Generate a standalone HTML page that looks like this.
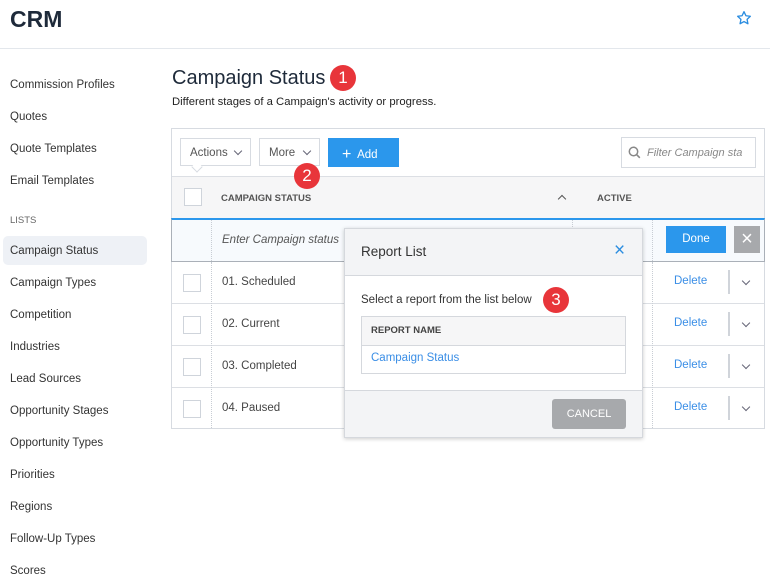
<!DOCTYPE html>
<html><head><style>
*{margin:0;padding:0;box-sizing:border-box}
body{width:770px;height:578px;overflow:hidden;background:#fff;font-family:"Liberation Sans",sans-serif;color:#333;position:relative}
.a{position:absolute;white-space:nowrap}
.side{font-size:11.5px;color:#333}
.badge{position:absolute;width:26px;height:26px;border-radius:50%;background:#e8353a;color:#fff;font-size:17px;text-align:center;line-height:26px}
.cb{position:absolute;width:18px;height:18px;border:1px solid #cfd4db;background:#fff}
.hl{position:absolute;height:1px;background:#dcdfe4}
.del{position:absolute;color:#3a8ee6;font-size:11.5px}
.chev{position:absolute;width:6px;height:6px;border-right:1.3px solid #667;border-bottom:1.3px solid #667;transform:rotate(45deg)}
</style></head><body>
<div class="a" style="left:10px;top:6px;font-size:23px;font-weight:bold;color:#1e2a3a">CRM</div>
<svg class="a" style="left:736px;top:10px" width="16" height="16" viewBox="0 0 24 24"><path d="M12 2.5l2.9 6.1 6.6.8-4.9 4.6 1.3 6.6L12 17.3 6.1 20.6l1.3-6.6L2.5 9.4l6.6-.8z" fill="none" stroke="#2b8de0" stroke-width="2" stroke-linejoin="round"/></svg>
<div class="hl" style="left:0;top:48px;width:770px;background:#e3e7ec"></div>

<div class="a" style="left:3px;top:236px;width:144px;height:29px;background:#eef1f6;border-radius:5px"></div>
<div class="a side" style="left:10px;top:79px">Commission Profiles</div>
<div class="a side" style="left:10px;top:111px">Quotes</div>
<div class="a side" style="left:10px;top:143px">Quote Templates</div>
<div class="a side" style="left:10px;top:175px">Email Templates</div>
<div class="a" style="left:10px;top:215px;font-size:9.5px;color:#666">LISTS</div>
<div class="a side" style="left:10px;top:245px">Campaign Status</div>
<div class="a side" style="left:10px;top:277px">Campaign Types</div>
<div class="a side" style="left:10px;top:309px">Competition</div>
<div class="a side" style="left:10px;top:341px">Industries</div>
<div class="a side" style="left:10px;top:373px">Lead Sources</div>
<div class="a side" style="left:10px;top:405px">Opportunity Stages</div>
<div class="a side" style="left:10px;top:437px">Opportunity Types</div>
<div class="a side" style="left:10px;top:469px">Priorities</div>
<div class="a side" style="left:10px;top:501px">Regions</div>
<div class="a side" style="left:10px;top:533px">Follow-Up Types</div>
<div class="a side" style="left:10px;top:565px">Scores</div>

<div class="a" style="left:172px;top:67px;font-size:20px;color:#1e2a3a">Campaign Status</div>
<div class="badge" style="left:330px;top:65px">1</div>
<div class="a" style="left:172px;top:96px;font-size:11.3px;color:#222">Different stages of a Campaign's activity or progress.</div>

<!-- table -->
<div class="a" style="left:171px;top:128px;width:594px;height:301px;border:1px solid #d7dbe1"></div>
<div class="a" style="left:180px;top:138px;width:71px;height:28px;border:1px solid #d7dbe1;font-size:11.5px;color:#555;padding:8px 0 0 9px">Actions</div>
<div class="chev" style="left:235px;top:148px"></div>
<div class="a" style="left:193px;top:163px;width:8px;height:8px;border-right:1px solid #d7dbe1;border-bottom:1px solid #d7dbe1;background:#fff;transform:rotate(45deg)"></div>
<div class="a" style="left:259px;top:138px;width:61px;height:28px;border:1px solid #d7dbe1;font-size:11.5px;color:#555;padding:8px 0 0 9px">More</div>
<div class="chev" style="left:304px;top:148px"></div>
<div class="a" style="left:328px;top:138px;width:71px;height:29px;background:#2b97ec;color:#fff;font-size:11.5px;padding:7px 0 0 14px"><span style="font-size:16px;position:relative;top:1px;font-weight:300">+</span>&nbsp; Add</div>
<div class="a" style="left:621px;top:137px;width:135px;height:31px;border:1px solid #d7dbe1;font-size:11px;font-style:italic;color:#888;padding:9px 0 0 25px;overflow:hidden">Filter Campaign sta</div>
<svg class="a" style="left:628px;top:146px" width="13" height="13" viewBox="0 0 13 13"><circle cx="5.5" cy="5.5" r="4.2" fill="none" stroke="#888" stroke-width="1.5"/><path d="M8.6 8.6l3.2 3.2" stroke="#888" stroke-width="1.6"/></svg>

<div class="a" style="left:172px;top:176px;width:592px;height:43px;background:#f6f6f7;border-top:1px solid #dcdfe4"></div>
<div class="cb" style="left:184px;top:188px"></div>
<div class="a" style="left:221px;top:193px;font-size:9.5px;font-weight:bold;color:#555">CAMPAIGN STATUS</div>
<div class="a" style="left:559px;top:196px;width:6px;height:6px;border-left:1.3px solid #555;border-top:1.3px solid #555;transform:rotate(45deg)"></div>
<div class="a" style="left:597px;top:193px;font-size:9.5px;font-weight:bold;color:#555">ACTIVE</div>
<div class="badge" style="left:294px;top:163px">2</div>

<!-- edit row -->
<div class="a" style="left:171px;top:218px;width:594px;height:44px;background:#f7fafd;border:1px solid #aab0b8;border-top:2px solid #2b97ec"></div>
<div class="a" style="left:211px;top:220px;height:41px;border-left:1px dotted #c8cdd4"></div>
<div class="a" style="left:572px;top:220px;height:41px;border-left:1px dotted #c8cdd4"></div>
<div class="a" style="left:652px;top:220px;height:41px;border-left:1px dotted #c8cdd4"></div>
<div class="a" style="left:222px;top:234px;font-size:11.5px;font-style:italic;color:#555">Enter Campaign status</div>
<div class="a" style="left:666px;top:226px;width:60px;height:27px;background:#2b97ec;color:#fff;font-size:11.5px;text-align:center;line-height:27px">Done</div>
<div class="a" style="left:734px;top:226px;width:26px;height:27px;background:#a7a9ac;color:#fff;font-size:20px;text-align:center;line-height:27px">×</div>

<!-- rows -->
<div class="hl" style="left:172px;top:303px;width:592px"></div>
<div class="hl" style="left:172px;top:345px;width:592px"></div>
<div class="hl" style="left:172px;top:387px;width:592px"></div>
<div class="a" style="left:211px;top:262px;height:166px;border-left:1px dotted #c8cdd4"></div>
<div class="a" style="left:652px;top:262px;height:166px;border-left:1px dotted #c8cdd4"></div>
<div class="cb" style="left:183px;top:274px"></div>
<div class="cb" style="left:183px;top:316px"></div>
<div class="cb" style="left:183px;top:358px"></div>
<div class="cb" style="left:183px;top:400px"></div>
<div class="a" style="left:222px;top:276px;font-size:11.5px;color:#444">01. Scheduled</div>
<div class="a" style="left:222px;top:318px;font-size:11.5px;color:#444">02. Current</div>
<div class="a" style="left:222px;top:360px;font-size:11.5px;color:#444">03. Completed</div>
<div class="a" style="left:222px;top:402px;font-size:11.5px;color:#444">04. Paused</div>
<div class="del" style="left:674px;top:275px">Delete</div>
<div class="del" style="left:674px;top:317px">Delete</div>
<div class="del" style="left:674px;top:359px">Delete</div>
<div class="del" style="left:674px;top:401px">Delete</div>
<div class="a" style="left:728px;top:270px;width:2px;height:24px;background:#d0d4da"></div>
<div class="a" style="left:728px;top:312px;width:2px;height:24px;background:#d0d4da"></div>
<div class="a" style="left:728px;top:354px;width:2px;height:24px;background:#d0d4da"></div>
<div class="a" style="left:728px;top:396px;width:2px;height:24px;background:#d0d4da"></div>
<div class="chev" style="left:743px;top:278px"></div>
<div class="chev" style="left:743px;top:320px"></div>
<div class="chev" style="left:743px;top:362px"></div>
<div class="chev" style="left:743px;top:404px"></div>

<!-- modal -->
<div class="a" style="left:344px;top:228px;width:299px;height:210px;background:#fff;border:1px solid #d5d8dd;box-shadow:0 1px 4px rgba(0,0,0,.2)"></div>
<div class="a" style="left:345px;top:229px;width:297px;height:47px;background:#f3f4f6;border-bottom:1px solid #d5d8dd"></div>
<div class="a" style="left:361px;top:244px;font-size:13.5px;color:#333">Report List</div>
<div class="a" style="left:614px;top:240px;font-size:19px;color:#2b8de0">×</div>
<div class="a" style="left:361px;top:294px;font-size:11.5px;color:#333">Select a report from the list below</div>
<div class="badge" style="left:543px;top:287px">3</div>
<div class="a" style="left:361px;top:316px;width:265px;height:58px;border:1px solid #d5d8dd"></div>
<div class="a" style="left:362px;top:317px;width:263px;height:29px;background:#f6f6f7;border-bottom:1px solid #d5d8dd"></div>
<div class="a" style="left:371px;top:325px;font-size:9.5px;font-weight:bold;color:#444">REPORT NAME</div>
<div class="a" style="left:371px;top:352px;font-size:11.5px;color:#3a8ee6">Campaign Status</div>
<div class="a" style="left:345px;top:390px;width:297px;height:47px;background:#f3f4f6;border-top:1px solid #d5d8dd"></div>
<div class="a" style="left:552px;top:399px;width:74px;height:30px;background:#a7a9ac;border-radius:3px;color:#fff;font-size:11px;text-align:center;line-height:30px">CANCEL</div>
</body></html>
